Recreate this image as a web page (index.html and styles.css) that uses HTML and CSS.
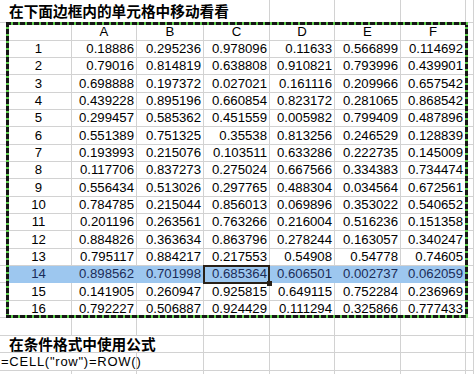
FILE: index.html
```html
<!DOCTYPE html>
<html>
<head>
<meta charset="utf-8">
<link rel="stylesheet" href="styles.css">
</head>
<body>
<div class="sheet">
  <div class="row h23">
    <div class="c edge"></div>
    <div class="c title span-2-6">在下面边框内的单元格中移动看看</div>
    <div class="c"></div><div class="c"></div><div class="c"></div><div class="c"></div>
  </div>
  <div class="block">
    <div class="row h18"><div class="c edge"></div><div class="c mid"></div><div class="c mid">A</div><div class="c mid">B</div><div class="c mid">C</div><div class="c mid">D</div><div class="c mid">E</div><div class="c mid">F</div><div class="c"></div></div>
    <div class="row h17"><div class="c edge"></div><div class="c mid">1</div><div class="c">0.18886</div><div class="c">0.295236</div><div class="c">0.978096</div><div class="c">0.11633</div><div class="c">0.566899</div><div class="c">0.114692</div><div class="c"></div></div>
    <div class="row h17"><div class="c edge"></div><div class="c mid">2</div><div class="c">0.79016</div><div class="c">0.814819</div><div class="c">0.638808</div><div class="c">0.910821</div><div class="c">0.793996</div><div class="c">0.439901</div><div class="c"></div></div>
    <div class="row h18"><div class="c edge"></div><div class="c mid">3</div><div class="c">0.698888</div><div class="c">0.197372</div><div class="c">0.027021</div><div class="c">0.161116</div><div class="c">0.209966</div><div class="c">0.657542</div><div class="c"></div></div>
    <div class="row h17"><div class="c edge"></div><div class="c mid">4</div><div class="c">0.439228</div><div class="c">0.895196</div><div class="c">0.660854</div><div class="c">0.823172</div><div class="c">0.281065</div><div class="c">0.868542</div><div class="c"></div></div>
    <div class="row h17"><div class="c edge"></div><div class="c mid">5</div><div class="c">0.299457</div><div class="c">0.585362</div><div class="c">0.451559</div><div class="c">0.005982</div><div class="c">0.799409</div><div class="c">0.487896</div><div class="c"></div></div>
    <div class="row h18"><div class="c edge"></div><div class="c mid">6</div><div class="c">0.551389</div><div class="c">0.751325</div><div class="c">0.35538</div><div class="c">0.813256</div><div class="c">0.246529</div><div class="c">0.128839</div><div class="c"></div></div>
    <div class="row h17"><div class="c edge"></div><div class="c mid">7</div><div class="c">0.193993</div><div class="c">0.215076</div><div class="c">0.103511</div><div class="c">0.633286</div><div class="c">0.222735</div><div class="c">0.145009</div><div class="c"></div></div>
    <div class="row h17"><div class="c edge"></div><div class="c mid">8</div><div class="c">0.117706</div><div class="c">0.837273</div><div class="c">0.275024</div><div class="c">0.667566</div><div class="c">0.334383</div><div class="c">0.734474</div><div class="c"></div></div>
    <div class="row h18"><div class="c edge"></div><div class="c mid">9</div><div class="c">0.556434</div><div class="c">0.513026</div><div class="c">0.297765</div><div class="c">0.488304</div><div class="c">0.034564</div><div class="c">0.672561</div><div class="c"></div></div>
    <div class="row h17"><div class="c edge"></div><div class="c mid">10</div><div class="c">0.784785</div><div class="c">0.215044</div><div class="c">0.856013</div><div class="c">0.069896</div><div class="c">0.353022</div><div class="c">0.540652</div><div class="c"></div></div>
    <div class="row h17"><div class="c edge"></div><div class="c mid">11</div><div class="c">0.201196</div><div class="c">0.263561</div><div class="c">0.763266</div><div class="c">0.216004</div><div class="c">0.516236</div><div class="c">0.151358</div><div class="c"></div></div>
    <div class="row h18"><div class="c edge"></div><div class="c mid">12</div><div class="c">0.884826</div><div class="c">0.363634</div><div class="c">0.863796</div><div class="c">0.278244</div><div class="c">0.163057</div><div class="c">0.340247</div><div class="c"></div></div>
    <div class="row h17"><div class="c edge"></div><div class="c mid">13</div><div class="c">0.795117</div><div class="c">0.884217</div><div class="c">0.217553</div><div class="c">0.54908</div><div class="c">0.54778</div><div class="c">0.74605</div><div class="c"></div></div>
    <div class="row h17 sel"><div class="c edge"></div><div class="c mid hl">14</div><div class="c hl">0.898562</div><div class="c hl">0.701998</div><div class="c hl act">0.685364</div><div class="c hl">0.606501</div><div class="c hl">0.002737</div><div class="c hl">0.062059</div><div class="c"></div></div>
    <div class="row h18"><div class="c edge"></div><div class="c mid">15</div><div class="c">0.141905</div><div class="c">0.260947</div><div class="c">0.925815</div><div class="c">0.649115</div><div class="c">0.752284</div><div class="c">0.236969</div><div class="c"></div></div>
    <div class="row h17"><div class="c edge"></div><div class="c mid">16</div><div class="c">0.792227</div><div class="c">0.506887</div><div class="c">0.924429</div><div class="c">0.111294</div><div class="c">0.325866</div><div class="c">0.777433</div><div class="c"></div></div>
  </div>
  <div class="row h18"><div class="c edge"></div><div class="c"></div><div class="c"></div><div class="c"></div><div class="c"></div><div class="c"></div><div class="c"></div><div class="c"></div><div class="c"></div></div>
  <div class="row h17"><div class="c edge"></div><div class="c title span-2-5">在条件格式中使用公式</div><div class="c"></div><div class="c"></div><div class="c"></div><div class="c"></div><div class="c"></div></div>
  <div class="row h18"><div class="c formula span-1-4">=CELL("row")=ROW()</div><div class="c"></div><div class="c"></div><div class="c"></div><div class="c"></div><div class="c"></div><div class="c"></div></div>
  <div class="row h18"><div class="c edge"></div><div class="c"></div><div class="c"></div><div class="c"></div><div class="c"></div><div class="c"></div><div class="c"></div><div class="c"></div><div class="c"></div></div>
</div>
</body>
</html>
```
FILE: styles.css
```css
html, body {
  margin: 0;
  padding: 0;
  background: #ffffff;
}

.sheet {
  width: 474px;
  height: 374px;
  overflow: hidden;
  font-family: "Liberation Sans", Arial, sans-serif;
  font-size: 13.2px;
  line-height: 1;
  color: #000000;
}

.row {
  display: grid;
  grid-template-columns: 6px 66px 65px 67px 66px 65px 66px 65px 8px;
}

.h17 { height: 17px; }
.h18 { height: 18px; }
.h23 { height: 23px; }

.c {
  box-sizing: border-box;
  border-right: 1px solid #d2d2d2;
  border-bottom: 1px solid #d2d2d2;
  display: flex;
  align-items: center;
  justify-content: flex-end;
  padding-right: 2px;
  white-space: nowrap;
  overflow: visible;
  min-width: 0;
  line-height: 1;
}

.c.edge {
  border-right: none;
  padding: 0;
}

.c.mid {
  justify-content: center;
  padding-right: 0;
}

.title {
  justify-content: flex-start;
  padding-left: 3px;
  font-family: "Noto Sans CJK SC", "Liberation Sans", sans-serif;
  font-weight: 700;
  font-size: 14.67px;
  line-height: 1;
}

.formula {
  justify-content: flex-start;
  padding-left: 1px;
  font-size: 13px;
  letter-spacing: 0.75px;
}

.span-2-6 { grid-column: 2 / 6; }
.span-2-5 { grid-column: 2 / 5; }
.span-1-4 { grid-column: 1 / 4; }

.block {
  position: relative;
}

.block::after {
  content: "";
  position: absolute;
  left: 6px;
  top: -1px;
  width: 462px;
  height: 296px;
  pointer-events: none;
  background:
    repeating-linear-gradient(90deg, #161616 0 5px, #5ccb4a 5px 7px) left top / 100% 3px no-repeat,
    repeating-linear-gradient(90deg, #161616 0 5px, #5ccb4a 5px 7px) left bottom / 100% 3px no-repeat,
    repeating-linear-gradient(180deg, #161616 0 5px, #5ccb4a 5px 7px) left top / 3px 100% no-repeat,
    repeating-linear-gradient(180deg, #161616 0 5px, #5ccb4a 5px 7px) right top / 3px 100% no-repeat;
}

.c.hl {
  background: #9dc7ef;
  border-color: #9dc7ef;
  color: #1b2c58;
}

.c.act {
  position: relative;
}

.c.act::after {
  content: "";
  position: absolute;
  left: -1px;
  top: -1px;
  right: -1px;
  bottom: -2px;
  border: 2px solid #2a2118;
}

.c.act::before {
  content: "";
  position: absolute;
  right: -3px;
  bottom: -4px;
  width: 5px;
  height: 5px;
  background: #2a2118;
  z-index: 1;
}
```
